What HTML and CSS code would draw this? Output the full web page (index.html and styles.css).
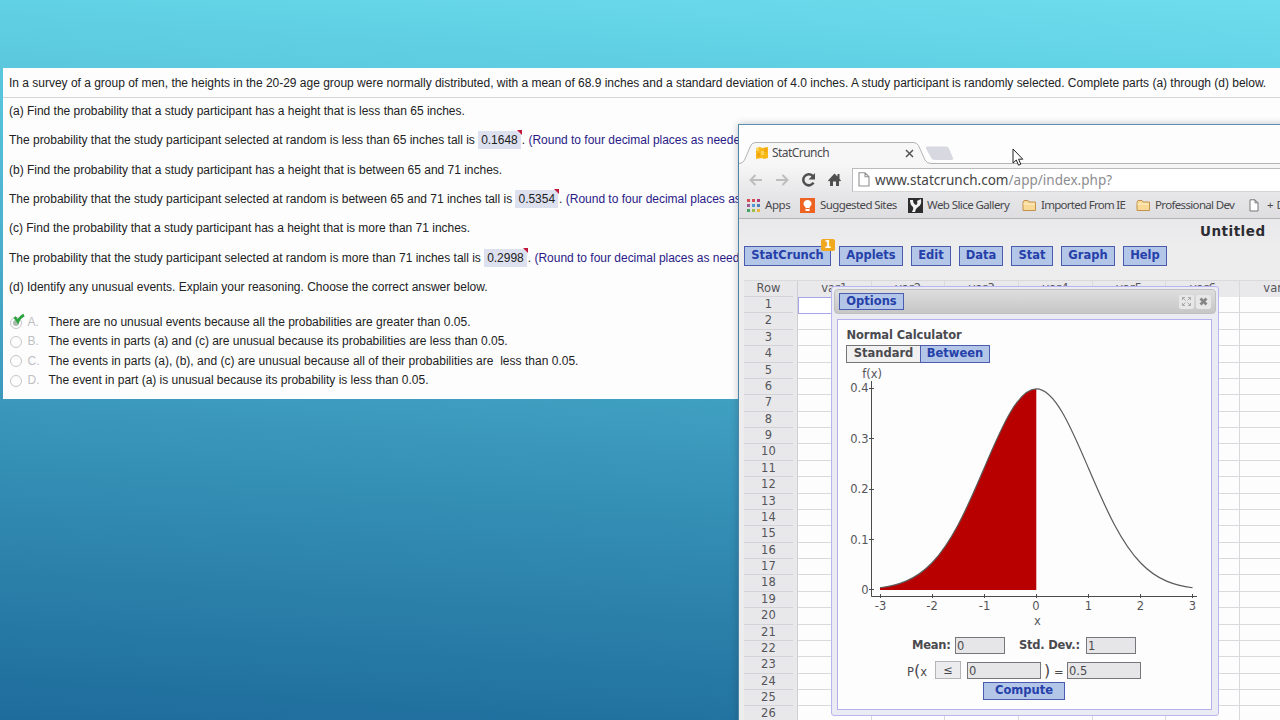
FILE: index.html
```html
<!DOCTYPE html>
<html lang="en">
<head>
<meta charset="utf-8">
<title>StatCrunch</title>
<link rel="stylesheet" href="styles.css">
</head>
<body>
<main class="desktop">
  <section class="paper">
    <p class="intro"><span class="t-intro">In a survey of a group of men, the heights in the 20-29 age group were normally distributed, with a mean of 68.9 inches and a standard deviation of 4.0 inches. A study participant is randomly selected. Complete parts (a) through (d) below.</span></p>
    <p class="line">(a) Find the probability that a study participant has a height that is less than 65 inches.</p>
    <p class="line">The probability that the study participant selected at random is less than 65 inches tall is <span class="answer">0.1648</span>. <span class="hint">(Round to four decimal places as neede</span></p>
    <p class="line">(b) Find the probability that a study participant has a height that is between 65 and 71 inches.</p>
    <p class="line">The probability that the study participant selected at random is between 65 and 71 inches tall is <span class="answer">0.5354</span>. <span class="hint">(Round to four decimal places as</span></p>
    <p class="line">(c) Find the probability that a study participant has a height that is more than 71 inches.</p>
    <p class="line">The probability that the study participant selected at random is more than 71 inches tall is <span class="answer">0.2998</span>. <span class="hint">(Round to four decimal places as need</span></p>
    <p class="line">(d) Identify any unusual events. Explain your reasoning. Choose the correct answer below.</p>
    <ul class="choices">
      <li><i class="radio on"><svg class="check" width="13" height="11" viewBox="0 0 13 11"><path d="M1.5 4 L5 8.5 Q7 4 11 2" fill="none" stroke="#2ba33f" stroke-width="2.8"/></svg></i><b>A.</b><span>There are no unusual events because all the probabilities are greater than 0.05.</span></li>
      <li><i class="radio"></i><b>B.</b><span>The events in parts (a) and (c) are unusual because its probabilities are less than 0.05.</span></li>
      <li><i class="radio"></i><b>C.</b><span class="wide">The events in parts (a), (b), and (c) are unusual because all of their probabilities are &nbsp;less than 0.05.</span></li>
      <li><i class="radio"></i><b>D.</b><span>The event in part (a) is unusual because its probability is less than 0.05.</span></li>
    </ul>
  </section>

  <section class="browser">
    <div class="tabstrip">
      <svg class="tabshape" width="541" height="39" viewBox="0 0 541 39">
        <path d="M0 38.5 Q4 38.5 5.500 35 L12 20 Q13.500 17.500 17 17.500 H174 Q178 17.500 179.500 20.500 L186 35 Q188 38.500 192 38.500 H541 V39 H0 Z" fill="#f7f7f7"/>
        <path d="M0 38.500 Q4 38.500 5.500 35 L12 20 Q13.500 17.500 17 17.500 H174 Q178 17.500 179.500 20.500 L186 35 Q188 38.500 192 38.500 H541" fill="none" stroke="#b3b3b7"/>
        <path d="M188 21.500 H207 Q209 21.500 210 23.500 L214 33 Q214.500 35 212 35 H196 Q193 35 192 32.500 L187 23.500 Q186.500 21.500 188 21.500Z" fill="#d7d8e0"/>
      </svg>
      <div class="tab">
        <svg width="14" height="14" viewBox="0 0 14 14"><path d="M1 2 L5 1 L7 2 L13 1 V12 L9 13 L7 12 L1 13Z" fill="#f8b916"/><path d="M1 2h3v3H1zM6 5h3v4H6z" fill="#fbd35b"/><path d="M9 2h3v4H9zM2 7h3v4H2z" fill="#f4a512"/></svg>
        <span class="tabname">StatCrunch</span>
        <svg class="close" width="9" height="9" viewBox="0 0 9 9"><path d="M1 1 L8 8 M8 1 L1 8" stroke="#555" stroke-width="1.500"/></svg>
      </div>
    </div>
    <div class="toolbar">
      <svg class="nav" width="104" height="22" viewBox="0 0 104 22">
        <g fill="none" stroke="#bdbdbd" stroke-width="2"><path d="M11 11H23M16.500 6L11.500 11L16.500 16"/><path d="M37 11H49M43.500 6L48.500 11L43.500 16"/></g>
        <path d="M73.700 7A5.500 5.500 0 1 0 74.500 13.700" fill="none" stroke="#505050" stroke-width="2.500"/>
        <path d="M76 4V10.500H69.500Z" fill="#505050"/>
        <path d="M89 11.500L95.500 4.500L98.500 7.500V5H100.500V9.700L102 11.500L101 12.500L100 11.700V17H97V12.500H94V17H91V11.700L90 12.500Z" fill="#505050"/>
      </svg>
      <div class="address">
        <svg width="12" height="15" viewBox="0 0 12 15"><path d="M1 .8H7L11 4.800V14H1ZM7 .8V4.800H11" fill="#fff" stroke="#929292" stroke-width="1.100"/></svg>
        <span class="url">www.statcrunch.com<em>/app/index.php?</em></span>
      </div>
    </div>
    <div class="bookmarks">
      <svg class="m1" width="13" height="13" viewBox="0 0 13 13"><path d="M0 0h3v3H0zM5 0h3v3H5z" fill="#db4b55"/><path d="M10 0h3v3h-3z" fill="#b43b7b"/><path d="M0 5h3v3H0z" fill="#9c5a95"/><path d="M5 5h3v3H5z" fill="#4b9bd0"/><path d="M10 5h3v3h-3z" fill="#4d7fb5"/><path d="M0 10h3v3H0z" fill="#42a563"/><path d="M5 10h3v3H5z" fill="#9cbf44"/><path d="M10 10h3v3h-3z" fill="#e9b53c"/></svg>
      <span class="b1">Apps</span>
      <svg class="m2" width="15" height="15" viewBox="0 0 15 15"><path d="M0 0h15v15H0z" fill="#ee6322"/><path d="M5.500 9.500Q3 7.500 3.500 5Q4.500 2 7.500 2T11.500 5Q12 7.500 9.500 9.500V13H5.500Z" fill="#fff"/><path d="M5.500 10.500h4" stroke="#ee6322"/></svg>
      <span class="b2">Suggested Sites</span>
      <svg class="m3" width="15" height="15" viewBox="0 0 15 15"><path d="M0 0h15v15H0z" fill="#2d2d2d"/><path d="M2 2L5 2Q5 6 8 7Q10 6 9 3L13 1Q14 7 10 9Q7 11 7 14H4Q6 11 5 9Q2 7 2 2Z" fill="#f4f4f4"/></svg>
      <span class="b3">Web Slice Gallery</span>
      <svg class="m4" width="15" height="13" viewBox="0 0 15 13"><path d="M1 11.500V3.500L2 1.500H6L7 3H13.500V11.500Z" fill="#f8d996" stroke="#c4924a"/><path d="M1.500 5H13" stroke="#fff1cd"/></svg>
      <span class="b4">Imported From IE</span>
      <svg class="m5" width="15" height="13" viewBox="0 0 15 13"><path d="M1 11.500V3.500L2 1.500H6L7 3H13.500V11.500Z" fill="#f8d996" stroke="#c4924a"/><path d="M1.500 5H13" stroke="#fff1cd"/></svg>
      <span class="b5">Professional Dev</span>
      <svg class="m6" width="10" height="13" viewBox="0 0 10 13"><path d="M1 .8H6L9 3.800V12H1ZM6 .8V3.800H9" fill="#fff" stroke="#777"/></svg>
      <span class="b6">+ D</span>
    </div>
    <div class="app">
      <h1>Untitled</h1>
      <nav class="menu">
        <a class="btn w1">StatCrunch<span class="badge">1</span></a><a class="btn w2">Applets</a><a class="btn w3">Edit</a><a class="btn w4">Data</a><a class="btn w5">Stat</a><a class="btn w6">Graph</a><a class="btn w7">Help</a>
      </nav>
      <div class="sheet">
        <div class="rows">
          <span class="head">Row</span><span>1</span><span>2</span><span>3</span><span>4</span><span>5</span><span>6</span><span>7</span><span>8</span><span>9</span><span>10</span><span>11</span><span>12</span><span>13</span><span>14</span><span>15</span><span>16</span><span>17</span><span>18</span><span>19</span><span>20</span><span>21</span><span>22</span><span>23</span><span>24</span><span>25</span><span>26</span>
        </div>
        <div class="data">
          <div class="vars"><span>var1</span><span>var2</span><span>var3</span><span>var4</span><span>var5</span><span>var6</span><span>var7</span></div>
          <div class="cells"><div class="selected"></div></div>
        </div>
      </div>
    </div>
  </section>

  <section class="dialog">
    <header class="bar">
      <a class="btn options">Options</a>
      <span class="tools">
        <i><svg width="9" height="9" viewBox="0 0 9 9"><path d="M.5 3V.5H3M.5 .5L3.500 3.500M6 .5H8.500V3M8.500 .5L5.500 3.500M.5 6V8.500H3M.5 8.500L3.500 5.500M6 8.500H8.500V6M8.500 8.500L5.500 5.500" stroke="#aaa" fill="none"/></svg></i>
        <i><svg width="9" height="9" viewBox="0 0 9 9"><path d="M1.500 1.500L7.500 7.500M7.500 1.500L1.500 7.500" stroke="#858585" stroke-width="2.800"/></svg></i>
      </span>
    </header>
    <div class="panel">
      <h2>Normal Calculator</h2>
      <div class="modes"><a class="btn standard">Standard</a><a class="btn between">Between</a></div>
      <svg class="chart" width="372" height="268" viewBox="838 363 372 268">
        <g transform="translate(1036.300 590) scale(52.100 -504)">
          <path d="M-3 0V.00443C-2.8333 .00665 -2.6667 .01023 -2.5 .01753C-2.3333 .02483 -2.1667 .03599 -2 .05399C-1.8333 .07199 -1.6667 .09714 -1.5 .12952C-1.3333 .1619 -1.1667 .20164 -1 .24197C-.8333 .2823 -.6667 .32273 -.5 .35207C-.3333 .38141 -.1667 .39894 0 .39894V0Z" fill="#b80000"/>
          <path class="curve" d="M-3 .00443C-2.8333 .00665 -2.6667 .01023 -2.5 .01753C-2.3333 .02483 -2.1667 .03599 -2 .05399C-1.8333 .07199 -1.6667 .09714 -1.5 .12952C-1.3333 .1619 -1.1667 .20164 -1 .24197C-.8333 .2823 -.6667 .32273 -.5 .35207C-.3333 .38141 -.1667 .39894 0 .39894C.1667 .39894 .3333 .38141 .5 .35207C.6667 .32273 .8333 .2823 1 .24197C1.1667 .20164 1.3333 .1619 1.5 .12952C1.6667 .09714 1.8333 .07199 2 .05399C2.1667 .03599 2.3333 .02483 2.5 .01753C2.6667 .01023 2.8333 .00665 3 .00443"/>
        </g>
        <path class="axis" d="M871.500 381V596.500H1197M869 388.500h5M869 438.500h5M869 489.500h5M869 539.500h5M869 589.500h5M880.500 594v4M932.500 594v4M984.500 594v4M1036.500 594v4M1088.500 594v4M1140.500 594v4M1192.500 594v4"/>
        <g class="label" text-anchor="end"><text x="868.500" y="392">0.4</text><text x="868.500" y="443">0.3</text><text x="868.500" y="493">0.2</text><text x="868.500" y="544">0.1</text><text x="868.500" y="594">0</text><text x="882" y="377.500">f(x)</text></g>
        <g class="label" text-anchor="middle"><text x="880.500" y="609.500">-3</text><text x="932" y="609.500">-2</text><text x="984.500" y="609.500">-1</text><text x="1036" y="609.500">0</text><text x="1088.500" y="609.500">1</text><text x="1140.500" y="609.500">2</text><text x="1192.500" y="609.500">3</text><text x="1037.500" y="624.500">x</text></g>
      </svg>
      <div class="params"><b class="mean">Mean:</b><span class="field short">0</span><b class="sd">Std. Dev.:</b><span class="field short">1</span></div>
      <div class="prob"><span class="px">P<big>(</big>x</span><span class="select">≤</span><span class="field long">0</span><span class="eq"><big>)</big> =</span><span class="field long">0.5</span></div>
      <a class="btn compute">Compute</a>
    </div>
  </section>
  <svg class="cursor" width="12" height="19" viewBox="0 0 12 19"><path d="M1 1V15L4.300 12L6.500 17.200L8.800 16.200L6.600 11.200H10.800Z" fill="#fff" stroke="#222"/></svg>
</main>
</body>
</html>
```
FILE: styles.css
```css
* { box-sizing: border-box; }
body { margin: 0; }
p, h1, h2, ul { margin: 0; padding: 0; }
.desktop {
  position: relative; width: 1280px; height: 720px; overflow: hidden;
  background: linear-gradient(184deg, #6edeee 0%, #62d2e5 10%, #3f9fc1 55%, #2e85ad 77%, #1e6c9c 100%);
}

/* Homework sheet */
.paper {
  position: absolute; left: 3px; top: 68px; width: 1277px; height: 331px;
  background: #fdfdfe; color: #222; white-space: nowrap; overflow: hidden;
  font: 12px/29.4px "Liberation Sans", Arial, sans-serif; letter-spacing: -.012px;
}
.intro { height: 30px; padding-left: 6px; line-height: 31px; border-bottom: 1px solid #d6d6da; margin-bottom: -1.2px; }
.line { height: 29.4px; padding-left: 6px; }
.answer { position: relative; display: inline-block; height: 18px; line-height: 18px; padding: 0 3px; margin: 0 1px 0 0; background: #dde0ee; }
.answer::after { content: ""; position: absolute; right: -1px; top: -1px; border-top: 5px solid #c2183c; border-left: 5px solid transparent; }
.hint { color: #2a1a86; }
.choices { list-style: none; padding: 10.4px 0 0 6.500px; }
.choices li { display: flex; align-items: center; height: 19.4px; line-height: 19.4px; }
.choices b { width: 21px; margin-left: 6px; color: #bfbfc3; font-weight: 400; }
.wide { letter-spacing: .016px; }
.radio { position: relative; width: 12px; height: 12px; border: 1px solid #c6c6ca; border-radius: 50%; }
.radio.on::before { content: ""; position: absolute; left: 2px; top: 2px; width: 6px; height: 6px; border-radius: 50%; background: #a9b9ab; }
.check { position: absolute; left: 2px; top: -5px; }

/* Browser window */
.browser {
  position: absolute; left: 738px; top: 124px; width: 560px; height: 610px;
  border: 1px solid #5d8fb2; border-left-color: #4b86a6; background: #ebebed;
  box-shadow: 0 0 7px rgba(40, 40, 50, .28); font-family: "Noto Sans", "Open Sans", sans-serif; color: #4b4b4f;
}
.tabstrip { position: relative; height: 39px; background: #fdfdfe; }
.tabshape { display: block; }
.tab { position: absolute; left: 16px; top: 21px; width: 159px; height: 14px; display: flex; align-items: center; }
.tabname { margin: -1px 0 0 3px; font-size: 11.500px; letter-spacing: -.62px; }
.tabname { letter-spacing: -.55px; font-size: 12px; }
.close { margin-left: auto; }
.toolbar { height: 29px; display: flex; align-items: center; background: linear-gradient(#f7f7f7, #e7e7e9); }
.nav { margin: 3px 9px 0 0; flex: none; }
.address { flex: 1; height: 24px; margin-top: 2px; border: 1px solid #bcbcc0; border-bottom-color: #d5d5d8; background: #fff; display: flex; align-items: center; padding-left: 5px; }
.url { margin-left: 5px; font-size: 13.500px; letter-spacing: .02px; color: #444; white-space: nowrap; }
.url em { font-style: normal; color: #8c8c90; }
.bookmarks { height: 26px; display: flex; align-items: center; padding-left: 8px; background: linear-gradient(#e7e7e9, #dedee0); border-bottom: 1px solid #b5b5b8; font-size: 11.500px; white-space: nowrap; color: #48484c; }
.bookmarks span, .bookmarks svg { flex: none; }
.bookmarks span { margin-top: -2px; }
.b1 { margin-left: 5px; width: 35px; letter-spacing: -.4px; }
.b2 { margin-left: 5px; width: 88px; letter-spacing: -.6px; }
.b3 { margin-left: 4px; width: 95px; letter-spacing: -.58px; }
.b4 { margin-left: 4px; width: 95px; letter-spacing: -.72px; }
.b5 { margin-left: 4px; width: 94px; letter-spacing: -.66px; }
.b6 { margin-left: 8px; }

.app { font-family: "DejaVu Sans", Verdana, sans-serif; background: linear-gradient(#e9e9eb, #ededee 30px); }
.app h1 { height: 27px; padding-left: 461px; font-size: 13.500px; line-height: 24px; letter-spacing: .5px; color: #2c2c32; }
.btn {
  position: relative; display: flex; align-items: center; justify-content: center; border: 1px solid #4a5cb0;
  background: #b3c6e8; color: #2540a8; font: bold 11.500px/1 "DejaVu Sans", Verdana, sans-serif; letter-spacing: 0;
}
.menu { display: flex; gap: 8px; padding-left: 5px; height: 34px; }
.menu .btn { height: 20px; }
.w1 { width: 87px; } .w2 { width: 64px; } .w3 { width: 40px; } .w4 { width: 44px; }
.w5 { width: 42px; } .w6 { width: 54px; } .w7 { width: 44px; }
.badge { position: absolute; right: -5px; top: -8px; width: 14px; height: 12px; border-radius: 2px; background: #f0a81e; color: #fff; font-size: 10px; line-height: 12px; text-align: center; }
.sheet { display: flex; margin-left: 5px; font-size: 11.500px; color: #55555a; letter-spacing: .1px; border-top: 1px solid #dadadd; }
.rows { width: 54px; text-align: center; background: #e8e8ea; border-right: 1px solid #cfcfd3; padding-right: 4px; flex: none; }
.rows span { display: block; height: 16.38px; line-height: 15.500px; border-bottom: 1px solid #d3d3d7; }
.rows .head { height: 16px; line-height: 14px; }
.vars { display: flex; height: 16px; line-height: 14px; background: #e9e9eb; }
.vars span { width: 73.7px; text-align: center; border-right: 1px solid #dadadd; flex: none; }
.cells {
  height: 426px; background:
  repeating-linear-gradient(90deg, transparent 0 72.7px, #d9d9dd 72.7px 73.7px),
  repeating-linear-gradient(#fdfdfe 0 15.38px, #d9d9dd 15.38px 16.38px);
}
.data { width: 510px; overflow: hidden; }
.selected { width: 74px; height: 17px; border: 1px solid #a9a5ea; background: #fff; }

/* Calculator dialog */
.dialog {
  position: absolute; left: 831px; top: 286px; width: 388px; height: 430px; padding: 2px 2px;
  border: 1px solid #b9b5ee; border-radius: 3px; background: #ebebf3; font-family: "DejaVu Sans", Verdana, sans-serif; color: #4a4a4e;
}
.bar { display: flex; align-items: center; height: 25px; padding: 0 4px 0 4px; border: 1px solid #bfbfc0; border-radius: 4px; background: linear-gradient(#dedede, #c6c6c6); }
.options { width: 65px; height: 17px; }
.tools { display: flex; gap: 2px; margin-left: auto; }
.tools i { width: 15px; height: 14px; display: grid; place-items: center; background: #e7e7e7; border-radius: 2px; }
.panel { display: flex; flex-direction: column; height: 391px; margin: 5px 4px 0 3px; border: 1px solid #b4b0ee; background: #fdfdfe; }
.panel h2 { height: 25px; padding: 7px 0 0 8.500px; font-size: 11.500px; line-height: 16px; letter-spacing: -.1px; }
.modes { display: flex; padding-left: 8px; height: 18px; }
.standard { width: 75px; background: #f1f1f1; color: #4a4a4e; border-color: #75757a; }
.between { width: 70px; margin-left: -1px; }
.chart { display: block; flex: none; }
.curve { fill: none; stroke: #5a5a5a; stroke-width: 1.2; vector-effect: non-scaling-stroke; }
.axis { fill: none; stroke: #4a4a4a; }
.label { font-size: 11.500px; fill: #55555a; letter-spacing: 0; }
.params, .prob { display: flex; align-items: center; font-size: 11.500px; white-space: nowrap; }
.params { height: 28px; padding-left: 74px; letter-spacing: -.25px; }
.mean { width: 43px; } .sd { width: 67px; margin-left: 14px; }
.field { height: 17px; border: 1px solid #77777b; background: #e6e6e8; padding-left: 1px; line-height: 16px; font-size: 11.500px; }
.short { width: 50px; } .long { width: 74px; }
.prob { height: 22px; padding-left: 69px; }
.px { width: 28px; } .prob big { font-size: 16px; }
.select { width: 26px; height: 18px; margin-right: 6px; border: 1px solid #b5b5b8; background: #ececee; text-align: center; line-height: 17px; }
.eq { width: 26px; padding-left: 3px; }
.compute { width: 82px; height: 18px; margin: 1px 0 0 145px; }
.cursor { position: absolute; left: 1012px; top: 148px; }
```
